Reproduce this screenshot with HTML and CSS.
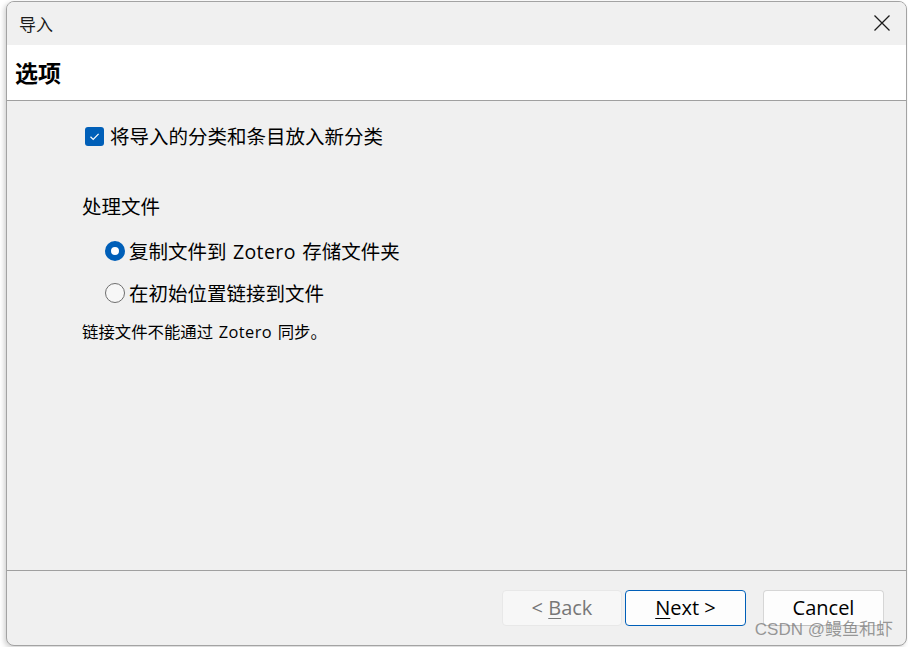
FILE: index.html
```html
<!DOCTYPE html>
<html lang="zh-CN">
<head>
<meta charset="utf-8">
<title>导入</title>
<link rel="stylesheet" href="styles.css">
</head>
<body>
<div class="window">
  <div class="titlebar">
    <span class="title">导入</span>
    <svg class="close" width="16" height="16" viewBox="0 0 16 16"><path d="M0.5 0.5 L15.5 15.5 M15.5 0.5 L0.5 15.5" stroke="#1b1b1b" stroke-width="1.3" fill="none"/></svg>
  </div>
  <div class="header">选项</div>
  <div class="content">
    <div class="row check-row">
      <span class="checkbox"><svg width="19" height="19" viewBox="0 0 19 19"><path d="M5.5 9.8 L8.2 12.4 L13.6 6.8" stroke="#fff" stroke-width="1.2" fill="none"/></svg></span>
      <span class="label">将导入的分类和条目放入新分类</span>
    </div>
    <div class="heading">处理文件</div>
    <div class="row radio-row first">
      <span class="radio on"></span>
      <span class="label">复制文件到 <span class="latin">Zotero</span> 存储文件夹</span>
    </div>
    <div class="row radio-row second">
      <span class="radio"></span>
      <span class="label">在初始位置链接到文件</span>
    </div>
    <div class="note">链接文件不能通过 <span class="latin">Zotero</span> 同步。</div>
  </div>
  <div class="footer">
    <button class="btn back"><span>&lt; <u>B</u>ack</span></button>
    <button class="btn next"><span><u>N</u>ext &gt;</span></button>
    <button class="btn cancel"><span>Cancel</span></button>
  </div>
  <div class="watermark">CSDN @鳗鱼和虾</div>
</div>
</body>
</html>
```
FILE: styles.css
```css
* { box-sizing: border-box; }
html, body { margin: 0; padding: 0; background: #ffffff; }
body {
  width: 908px;
  height: 647px;
  overflow: hidden;
  font-family: "Noto Sans CJK SC", "Noto Sans", sans-serif;
  color: #000;
}
.window {
  position: relative;
  margin: 1px 0 0 6px;
  width: 901px;
  height: 645px;
  border: 1px solid #a3a3a3;
  border-radius: 8px;
  background: #f0f0f0;
  box-shadow: -2px 2px 5px rgba(0,0,0,0.18);
  display: flex;
  flex-direction: column;
  overflow: hidden;
}
.titlebar {
  height: 43px;
  flex: none;
  display: flex;
  align-items: center;
  justify-content: space-between;
  padding: 0 16px 0 12px;
  background: #f0f0f0;
}
.title { font-size: 17px; line-height: 20px; color: #1a1a1a; }
.close { display: block; margin-top: -1px; }
.header {
  height: 56px;
  flex: none;
  background: #ffffff;
  border-bottom: 1px solid #a0a0a0;
  padding-left: 8px;
  font-size: 23px;
  font-weight: 700;
  line-height: 54px;
}
.content {
  flex: 1;
  padding-left: 75px;
  display: flex;
  flex-direction: column;
}
.row { display: flex; align-items: center; height: 24px; }
.label { font-size: 19.5px; line-height: 24px; word-spacing: 2px; }
.latin { font-family: "Open Sans", "Noto Sans", sans-serif; letter-spacing: 0.4px; }
.check-row { margin-top: 23px; margin-left: 3px; }
.checkbox {
  width: 19px; height: 19px;
  border-radius: 3px;
  background: #005fb8;
  margin-right: 6px;
  display: block;
}
.checkbox svg { display: block; }
.heading { margin-top: 46px; font-size: 19.5px; line-height: 24px; }
.radio-row { margin-left: 23px; }
.radio-row.first { margin-top: 21px; }
.radio-row.second { margin-top: 18px; }
.radio {
  width: 20px; height: 20px;
  border-radius: 50%;
  border: 1px solid #6e6e6e;
  background: #f7f7f7;
  margin-right: 4px;
  flex: none;
}
.radio.on {
  border: 6px solid #005fb8;
  background: #ffffff;
}
.note { margin-top: 16px; font-size: 16.4px; line-height: 20px; word-spacing: 2px; }
.footer {
  height: 75px;
  flex: none;
  border-top: 1px solid #a0a0a0;
  display: flex;
  padding: 19px 22px 0 0;
  justify-content: flex-end;
}
.btn {
  height: 36px;
  width: 121px;
  border-radius: 4px;
  font-family: "Open Sans", "Noto Sans", sans-serif;
  font-size: 20px;
  padding: 0;
  display: flex;
  align-items: center;
  justify-content: center;
  background: #fdfdfd;
  color: #000;
  border: 1px solid #d6d6d6;
  border-bottom-color: #c2c2c2;
}
.btn span { line-height: 24px; }
.btn u { text-underline-offset: 3px; text-decoration-thickness: 1px; }
.back {
  width: 120px;
  background: #f7f7f7;
  border-color: #e8e8e8;
  color: #777;
}
.next {
  margin-left: 3px;
  border: 1px solid #005fb8;
}
.cancel { margin-left: 17px; }
.watermark {
  position: absolute;
  right: 13px;
  bottom: 5px;
  font-family: "Liberation Sans", "Noto Sans CJK SC", sans-serif;
  font-size: 17px;
  line-height: 20px;
  color: rgba(120,120,120,0.75);
}
```
